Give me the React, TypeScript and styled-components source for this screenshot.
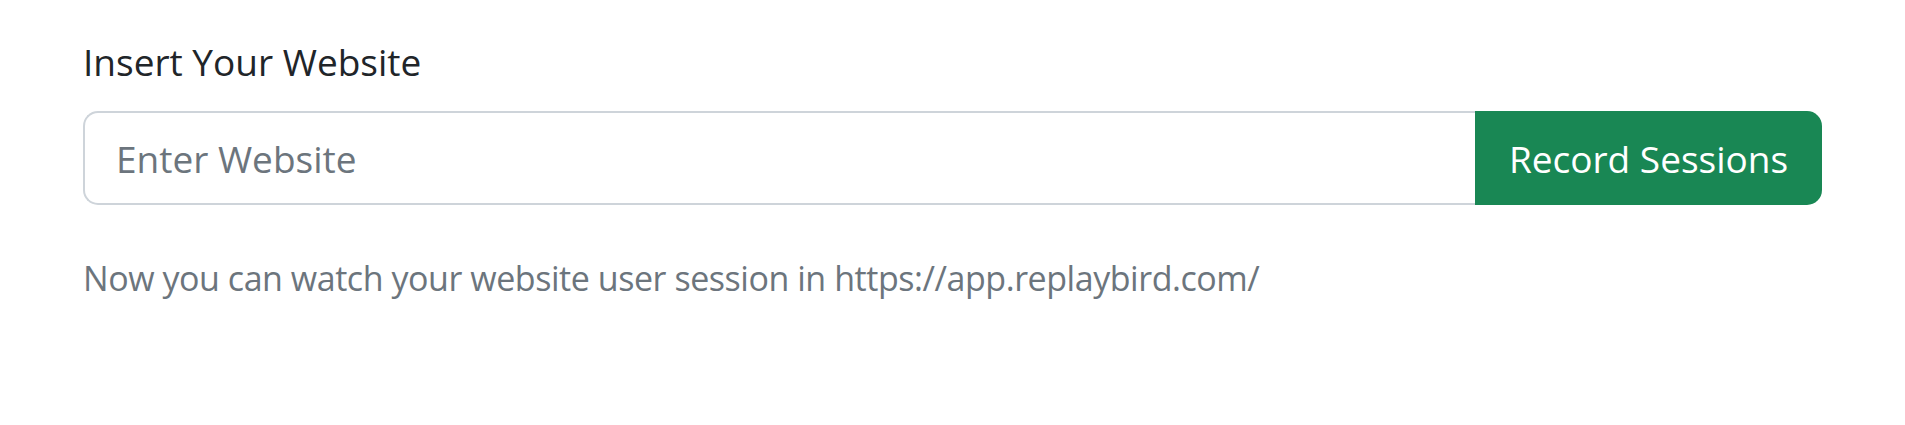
import React from "react";
import styled, { createGlobalStyle } from "styled-components";

const GlobalStyle = createGlobalStyle`
  html, body {
    margin: 0;
    padding: 0;
    background: #ffffff;
  }
  body {
    font-family: "Open Sans", "Noto Sans", sans-serif;
    color: #212529;
  }
`;

const Page = styled.div`
  padding: 32px 83px 0;
`;

const Label = styled.label`
  display: block;
  font-size: 37px;
  line-height: 59px;
  color: #212529;
  margin-bottom: 20px;
`;

const InputGroup = styled.div`
  display: flex;
  height: 94px;
`;

const Input = styled.input`
  flex: 1;
  min-width: 0;
  box-sizing: border-box;
  border: 2px solid #ced4da;
  border-right: none;
  border-radius: 15px 0 0 15px;
  padding: 0 31px;
  font-family: inherit;
  font-size: 37px;
  color: #212529;
  outline: none;

  &::placeholder {
    color: #6c757d;
    opacity: 1;
  }
`;

const Button = styled.button`
  width: 347px;
  border: none;
  border-radius: 0 15px 15px 0;
  background: #198754;
  color: #ffffff;
  font-family: inherit;
  font-size: 37px;
  cursor: pointer;
`;

const Help = styled.p`
  margin: 45px 0 0;
  font-size: 34px;
  letter-spacing: -0.45px;
  line-height: 56px;
  color: #6c757d;
`;

const App = (): JSX.Element => (
  <>
    <GlobalStyle />
    <Page>
      <Label htmlFor="website">Insert Your Website</Label>
      <InputGroup>
        <Input id="website" type="text" placeholder="Enter Website" />
        <Button type="button">Record Sessions</Button>
      </InputGroup>
      <Help>
        Now you can watch your website user session in https://app.replaybird.com/
      </Help>
    </Page>
  </>
);

export default App;
